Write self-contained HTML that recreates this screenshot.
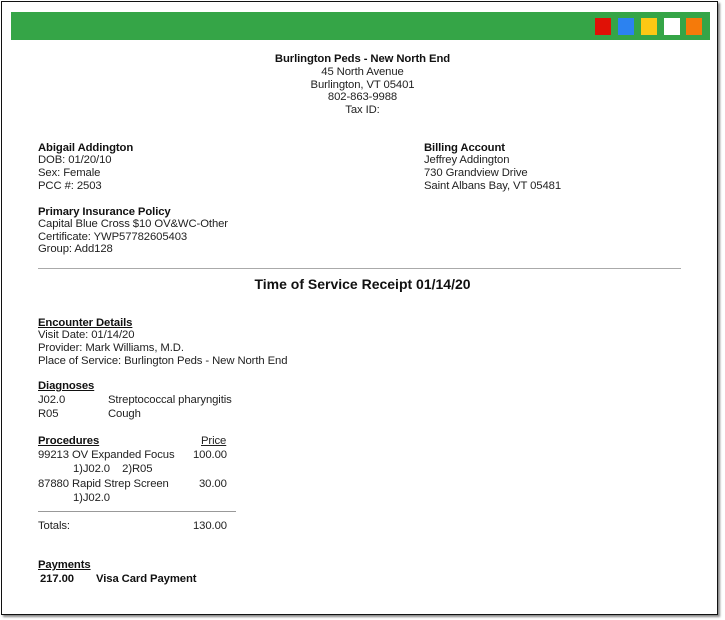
<!DOCTYPE html>
<html><head><style>
body{margin:0;width:725px;height:620px;background:#fff;position:relative;overflow:hidden;font-family:"Liberation Sans",Arial,sans-serif;font-size:11.3px;color:#222;letter-spacing:-0.1px}
.frame{position:absolute;left:1px;top:1px;width:715px;height:612px;border:1px solid #111;box-shadow:2px 2px 2px #888}
.bar{position:absolute;left:11px;top:12px;width:699px;height:28px;background:#35a547}
.sq{position:absolute;top:18px;width:16px;height:17px}
.t{position:absolute;white-space:nowrap;line-height:12px}
.c{left:0;width:725px;text-align:center}
b{font-weight:bold;color:#111}
u{text-decoration:underline}
.hr{position:absolute;height:1px;background:#aaa}
</style></head><body>
<div class="frame"></div>
<div class="bar"></div>
<div class="sq" style="left:595px;background:#e01106"></div>
<div class="sq" style="left:618px;background:#2c82f0"></div>
<div class="sq" style="left:641px;background:#fcc814"></div>
<div class="sq" style="left:664px;background:#fff"></div>
<div class="sq" style="left:686px;background:#f57a0a"></div>

<div class="t c" style="top:53px"><b>Burlington Peds - New North End</b></div>
<div class="t c" style="top:66px">45 North Avenue</div>
<div class="t c" style="top:79px">Burlington, VT 05401</div>
<div class="t c" style="top:91px">802-863-9988</div>
<div class="t c" style="top:104px">Tax ID:</div>

<div class="t" style="left:38px;top:142px"><b>Abigail Addington</b></div>
<div class="t" style="left:38px;top:154px">DOB: 01/20/10</div>
<div class="t" style="left:38px;top:167px">Sex: Female</div>
<div class="t" style="left:38px;top:180px">PCC #: 2503</div>

<div class="t" style="left:424px;top:142px"><b>Billing Account</b></div>
<div class="t" style="left:424px;top:154px">Jeffrey Addington</div>
<div class="t" style="left:424px;top:167px">730 Grandview Drive</div>
<div class="t" style="left:424px;top:180px">Saint Albans Bay, VT 05481</div>

<div class="t" style="left:38px;top:206px"><b>Primary Insurance Policy</b></div>
<div class="t" style="left:38px;top:218px">Capital Blue Cross $10 OV&amp;WC-Other</div>
<div class="t" style="left:38px;top:231px">Certificate: YWP57782605403</div>
<div class="t" style="left:38px;top:243px">Group: Add128</div>

<div class="hr" style="left:38px;top:268px;width:643px"></div>
<div class="t c" style="top:276px;font-size:14px;line-height:16px;letter-spacing:0"><b>Time of Service Receipt 01/14/20</b></div>

<div class="t" style="left:38px;top:317px"><b><u>Encounter Details</u></b></div>
<div class="t" style="left:38px;top:329px">Visit Date: 01/14/20</div>
<div class="t" style="left:38px;top:342px">Provider: Mark Williams, M.D.</div>
<div class="t" style="left:38px;top:355px">Place of Service: Burlington Peds - New North End</div>

<div class="t" style="left:38px;top:380px"><b><u>Diagnoses</u></b></div>
<div class="t" style="left:38px;top:394px">J02.0</div>
<div class="t" style="left:108px;top:394px">Streptococcal pharyngitis</div>
<div class="t" style="left:38px;top:408px">R05</div>
<div class="t" style="left:108px;top:408px">Cough</div>

<div class="t" style="left:38px;top:435px"><b><u>Procedures</u></b></div>
<div class="t" style="left:201px;top:435px"><u>Price</u></div>
<div class="t" style="left:38px;top:449px">99213 OV Expanded Focus</div>
<div class="t" style="left:193px;top:449px">100.00</div>
<div class="t" style="left:73px;top:463px">1)J02.0&nbsp;&nbsp;&nbsp;&nbsp;2)R05</div>
<div class="t" style="left:38px;top:478px">87880 Rapid Strep Screen</div>
<div class="t" style="left:199px;top:478px">30.00</div>
<div class="t" style="left:73px;top:492px">1)J02.0</div>
<div class="hr" style="left:38px;top:511px;width:198px;background:#999"></div>
<div class="t" style="left:38px;top:520px">Totals:</div>
<div class="t" style="left:193px;top:520px">130.00</div>

<div class="t" style="left:38px;top:559px"><b><u>Payments</u></b></div>
<div class="t" style="left:40px;top:573px"><b>217.00</b></div>
<div class="t" style="left:96px;top:573px"><b>Visa Card Payment</b></div>
</body></html>
